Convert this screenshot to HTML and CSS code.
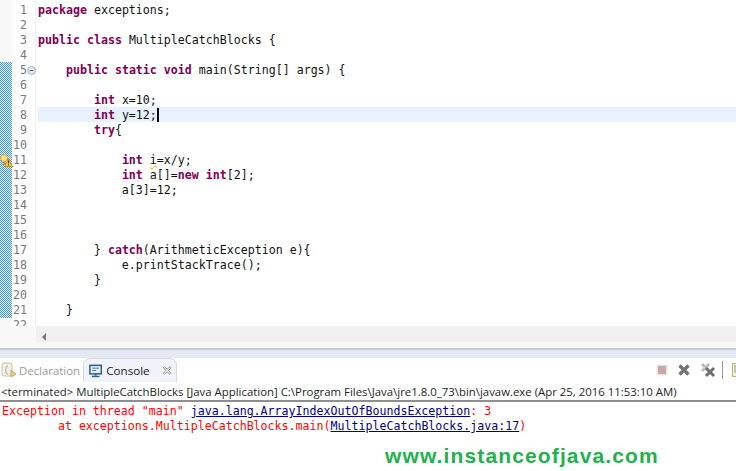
FILE: index.html
```html
<!DOCTYPE html>
<html lang="en">
<head>
<meta charset="utf-8">
<title>MultipleCatchBlocks</title>
<link rel="stylesheet" href="styles.css">
</head>
<body>
<main class="ide">
  <section class="editor">
    <div class="ruler"><svg class="ruler-fill" width="12" height="256"><defs><pattern id="dither" width="2" height="2" patternUnits="userSpaceOnUse"><rect width="2" height="2" fill="#fff"/><rect width="1" height="1" fill="#2f94ee"/><rect x="1" y="1" width="1" height="1" fill="#2f94ee"/></pattern></defs><rect width="12" height="256" fill="url(#dither)" shape-rendering="crispEdges"/></svg></div>
    <div class="gutter">
      <div class="num">1</div><div class="num">2</div><div class="num">3</div><div class="num">4</div>
      <div class="num">5<svg class="fold" viewBox="0 0 9 9" width="9" height="9"><circle cx="4.500" cy="4.500" r="4" fill="#dfe6ee" stroke="#a9b4c2"/><path d="M2.500 4.500h4" stroke="#5d6b7d"/></svg></div>
      <div class="num">6</div><div class="num">7</div><div class="num">8</div><div class="num">9</div>
      <div class="num">10</div><div class="num">11</div><div class="num">12</div><div class="num">13</div><div class="num">14</div><div class="num">15</div><div class="num">16</div><div class="num">17</div><div class="num">18</div><div class="num">19</div><div class="num">20</div><div class="num">21</div><div class="num">22</div>
    </div>
    <div class="code">
      <div class="line"><b>package</b> exceptions;</div>
      <div class="line"></div>
      <div class="line"><b>public</b> <b>class</b> MultipleCatchBlocks {</div>
      <div class="line"></div>
      <div class="line">    <b>public</b> <b>static</b> <b>void</b> main(String[] args) {</div>
      <div class="line"></div>
      <div class="line">        <b>int</b> x=10;</div>
      <div class="line current">        <b>int</b> y=12;<span class="caret"></span></div>
      <div class="line">        <b>try</b>{</div>
      <div class="line"></div>
      <div class="line">            <b>int</b> <span class="warn">i</span>=x/y;</div>
      <div class="line">            <b>int</b> a[]=<b>new</b> <b>int</b>[2];</div>
      <div class="line">            a[3]=12;</div>
      <div class="line"></div>
      <div class="line"></div>
      <div class="line"></div>
      <div class="line">        } <b>catch</b>(ArithmeticException e){</div>
      <div class="line">            e.printStackTrace();</div>
      <div class="line">        }</div>
      <div class="line"></div>
      <div class="line">    }</div>
      <div class="line"></div>
    </div>
    <svg class="marker" viewBox="0 0 13 13" width="13" height="13">
      <circle cx="4" cy="4" r="3.500" fill="#fbe08a" stroke="#d9a520"/>
      <path d="M2.500 8h3v3h-3z" fill="#a89a7c"/>
      <path d="M8.500 4.500l4 8h-8z" fill="#f6c445" stroke="#b8860b" stroke-width=".7"/>
      <path d="M8.500 6.500v3M8.500 10.500v1.200" stroke="#4a3300" stroke-width="1"/>
    </svg>
  </section>
  <div class="hscroll">
    <div class="hscroll-pad"></div>
    <div class="hscroll-track"><span class="arrow"></span></div>
  </div>
  <div class="sash"></div>
  <nav class="tabs">
    <div class="tab">
      <svg class="tab-icon" viewBox="0 0 16 16" width="16" height="16"><rect x="1" y="1" width="10" height="13" rx="2" fill="#f4f1e4" stroke="#c8c2a8"/><path d="M10 8l5 4-5 3z" fill="#e8cf8c" stroke="#c4a860"/><path d="M7 4c-2 0-2 1-2 2.500S4 8 4 8s1 0 1 1.500S5 12 7 12" fill="none" stroke="#8aa6c4"/></svg>
      <span class="tab-label">Declaration</span>
    </div>
    <div class="tab active">
      <svg class="tab-icon" viewBox="0 0 14 14" width="14" height="14"><rect x="1" y="1" width="12" height="9" fill="#e9eff6" stroke="#2f5b93" stroke-width="1.600"/><path d="M3.500 4h7M3.500 6.500h4" stroke="#3c6aa6"/><path d="M3 12h8v1.500H3z" fill="#2f5b93"/><path d="M6 10h2v2H6z" fill="#2f5b93"/></svg>
      <span class="tab-label">Console</span>
      <svg class="tab-close" viewBox="0 0 11 11" width="11" height="11"><path d="M1.500 2.500l1-1L5.500 4l3-2.500 1 1L7 5.500l2.500 3-1 1-3-2.500-3 2.500-1-1L4 5.500z" fill="#fff" stroke="#8a8a8a"/></svg>
    </div>
    <div class="tools">
      <svg viewBox="0 0 12 12" width="12" height="12"><rect x=".5" y=".5" width="11" height="11" fill="#e4e4e4"/><rect x="2" y="2" width="8" height="8" fill="#c6a6a6"/></svg>
      <svg viewBox="0 0 14 14" width="14" height="14"><path d="M2.500 2.500l9 9M11.500 2.500l-9 9" stroke="#737373" stroke-width="3.400"/></svg>
      <svg viewBox="0 0 16 16" width="16" height="16"><path d="M2 2l7 7M9 2L2 9" stroke="#b9c0c0" stroke-width="3"/><path d="M6 6l8 8M14 6l-8 8" stroke="#6f6f6f" stroke-width="3"/></svg>
      <span class="tool-sep"></span>
      <svg class="tool-doc" viewBox="0 0 4 14" width="4" height="14"><rect x=".5" y=".5" width="6" height="13" fill="#f5f1dc" stroke="#c4b06c"/><path d="M2 3h2M2 5h2M2 7h2M2 9h2" stroke="#7f9ac0"/></svg>
    </div>
  </nav>
  <section class="console">
    <div class="status">&lt;terminated&gt; MultipleCatchBlocks [Java Application] C:\Program Files\Java\jre1.8.0_73\bin\javaw.exe (Apr 25, 2016 11:53:10 AM)</div>
    <div class="output">
      <div class="out-line">Exception in thread "main" <a class="link" href="#">java.lang.ArrayIndexOutOfBoundsException</a>: 3</div>
      <div class="out-line">        at exceptions.MultipleCatchBlocks.main(<a class="link" href="#">MultipleCatchBlocks.java:17</a>)</div>
    </div>
    <div class="watermark">www.instanceofjava.com</div>
  </section>
</main>
</body>
</html>
```
FILE: styles.css
```css
* { box-sizing: border-box; }
html, body { margin: 0; padding: 0; }
body { background: #fff; overflow: hidden; }
.ide { width: 736px; height: 471px; display: flex; flex-direction: column; overflow: hidden; }
.editor { position: relative; display: flex; height: 326px; overflow: hidden; background: #fff; }
.ruler { width: 12px; flex: none; background: #f8f8f8; padding-top: 62px; }
.ruler-fill { display: block; }
.gutter { width: 24px; flex: none; padding-top: 3px; background: #fff; border-right: 1px solid #f0f0f0; font: 11.6px/15px "DejaVu Sans Mono", monospace; color: #787878; }
.num { position: relative; height: 15px; text-align: right; padding-right: 8px; }
.fold { position: absolute; left: 15px; top: 3px; }
.code { flex: 1; margin-left: 2px; padding-top: 2px; font: 11.62px/17px "DejaVu Sans Mono", monospace; color: #111; }
.line { height: 15px; white-space: pre; }
.line b { color: #7f0055; font-weight: 700; }
.current { background: #e8f2fe; }
.caret { display: inline-block; width: 2px; height: 14px; background: #000; vertical-align: -3px; }
.warn { text-decoration: underline wavy #e8a800 1px; }
.marker { position: absolute; left: 0; top: 154px; }
.hscroll { display: flex; height: 22px; }
.hscroll-pad { width: 36px; background: #f8f8f8; }
.hscroll-track { flex: 1; background: linear-gradient(#f0f0f0 0 16px, #f7f7f7 16px); padding: 7px 0 0 6px; }
.arrow { display: block; width: 0; height: 0; border: 4px solid transparent; border-right-color: #777; border-left: 0; }
.sash { height: 10px; background: #e4e8f3; border-top: 2px solid #c9cbd4; }
.tabs { display: flex; align-items: flex-end; height: 24px; background: #fff; }
.tab { display: flex; align-items: center; gap: 2px; width: 83px; height: 24px; padding: 0 0 0 1px; font: 11.4px "Open Sans", sans-serif; color: #9a9a9a; }
.tab.active { width: 94px; gap: 4px; padding: 0 4px 0 5px; background: #f0f3f9; border: 1px solid #d5dbe6; border-bottom: 0; border-radius: 7px 7px 0 0; font-size: 11.6px; color: #1c1c1c; }
.tab-close { margin-left: 8px; }
.tools { margin-left: auto; height: 24px; display: flex; align-items: center; gap: 9px; }
.tool-sep { width: 1px; height: 18px; margin-left: -3px; background: #999; }
.console { position: relative; flex: 1; background: #fff; }
.status { height: 20px; padding-left: 1px; border-bottom: 2px solid #8f8f8f; font: 11.4px/20px "Open Sans", sans-serif; color: #1e1e1e; white-space: pre; }
.output { padding: 2px 0 0 2px; font: 11.62px/15px "DejaVu Sans Mono", monospace; color: #ff0000; }
.out-line { height: 15px; white-space: pre; }
.link { color: #000080; text-decoration: underline; }
.watermark { position: absolute; left: 385px; top: 62px; font: 700 21px "Liberation Sans", sans-serif; letter-spacing: 1.13px; color: #22b14c; white-space: pre; }
```
